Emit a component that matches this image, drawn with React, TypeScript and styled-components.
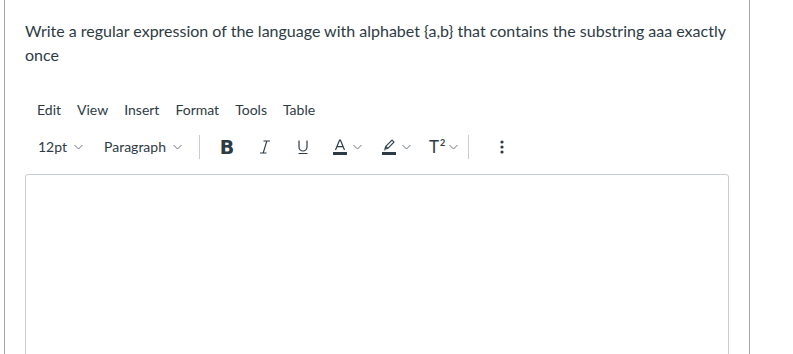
import React from "react"
import styled, { createGlobalStyle } from "styled-components"

const Global = createGlobalStyle`
  html, body { margin: 0; padding: 0; background: #fff; }
  body { font-family: Lato, "Open Sans", sans-serif; color: #2d3b45; overflow: hidden; }
`

const question =
  "Write a regular expression of the language with alphabet {a,b} that contains the substring aaa exactly once"

const Chevron = () => (
  <S.Chev width="9" height="6" viewBox="0 0 9 6">
    <path d="M0.5 1l4 4 4-4" fill="none" stroke="#6b7780" strokeWidth="1" />
  </S.Chev>
)

export default function App() {
  const menus = ["Edit", "View", "Insert", "Format", "Tools", "Table"]
  return (
    <>
      <Global />
      <S.Panel>
        <S.Question>{question}</S.Question>
        <S.MenuBar>
          {menus.map((m) => (
            <S.MenuItem key={m}>{m}</S.MenuItem>
          ))}
        </S.MenuBar>
        <S.Toolbar>
          <S.Group $gap={21}>
            <S.Drop>12pt <Chevron /></S.Drop>
            <S.Drop>Paragraph <Chevron /></S.Drop>
          </S.Group>
          <S.Sep $left={17} $right={17} />
          <S.Group $gap={18}>
            <S.Btn>
              <S.Bold>B</S.Bold>
            </S.Btn>
            <S.Btn>
              <svg width="14" height="16" viewBox="0 0 14 16">
                <path d="M5.5 2h6.5M2 14h6.5M8.8 2L5.2 14" fill="none" stroke="#2d3b45" strokeWidth="1.1" />
              </svg>
            </S.Btn>
            <S.Btn>
              <svg width="14" height="16" viewBox="0 0 14 16">
                <path d="M3 1.5v6.5a4 4 0 0 0 8 0V1.5M2.5 14.5h9" fill="none" stroke="#2d3b45" strokeWidth="1.2" />
              </svg>
            </S.Btn>
            <S.Combo>
              <svg width="18" height="18" viewBox="0 0 18 18">
                <path d="M4.5 12L8.6 2h0.8L13.5 12M6.2 8.6h5.6" fill="none" stroke="#2d3b45" strokeWidth="1.2" />
                <rect x="2" y="14" width="14" height="3" fill="#2d3b45" />
              </svg>
              <Chevron />
            </S.Combo>
            <S.Combo>
              <svg width="18" height="18" viewBox="0 0 18 18">
                <path d="M5 11l0.8-2.6 6.2-6.2 2 2-6.2 6.2z M5.8 8.4l2 2" fill="none" stroke="#2d3b45" strokeWidth="1.2" strokeLinejoin="round" />
                <path d="M3.5 12.5l1.3-1.3 1 1z" fill="#2d3b45" />
                <rect x="2" y="14" width="14" height="3" fill="#2d3b45" />
              </svg>
              <Chevron />
            </S.Combo>
            <S.Combo>
              <S.Sup>
                T<sup>2</sup>
              </S.Sup>
              <Chevron />
            </S.Combo>
          </S.Group>
          <S.Sep $left={10} $right={23} />
          <S.Btn>
            <svg width="4" height="16" viewBox="0 0 4 16">
              <circle cx="2" cy="3" r="1.6" fill="#2d3b45" />
              <circle cx="2" cy="8" r="1.6" fill="#2d3b45" />
              <circle cx="2" cy="13" r="1.6" fill="#2d3b45" />
            </svg>
          </S.Btn>
        </S.Toolbar>
        <S.Editor />
      </S.Panel>
    </>
  )
}

const S = {
  Panel: styled.div`
    margin: 0 0 0 4px;
    width: 746px;
    height: 420px;
    border-left: 1px solid #a5a5a5;
    border-right: 1px solid #a5a5a5;
    padding: 19px 20px 0 20px;
    box-sizing: border-box;
  `,

  Question: styled.p`
    margin: 0;
    font-size: 16px;
    line-height: 24px;
  `,

  MenuBar: styled.div`
    display: flex;
    margin-top: 25px;
    padding-left: 4px;
    height: 34px;
    align-items: center;
  `,

  MenuItem: styled.span`
    font-size: 14px;
    padding: 0 8px;
  `,

  Toolbar: styled.div`
    display: flex;
    align-items: center;
    height: 41px;
    padding-left: 13px;
  `,

  Group: styled.div<{ $gap: number }>`
    display: flex;
    align-items: center;
    gap: ${(p) => p.$gap}px;
  `,

  Drop: styled.span`
    display: flex;
    align-items: center;
    gap: 7px;
    font-size: 14px;
  `,

  Chev: styled.svg`
    display: block;
  `,

  Sep: styled.div<{ $left: number; $right: number }>`
    flex-shrink: 0;
    width: 1px;
    height: 24px;
    background: #c7cdd1;
    margin: 0 ${(p) => p.$right}px 0 ${(p) => p.$left}px;
  `,

  Btn: styled.span`
    display: flex;
    align-items: center;
    justify-content: center;
    width: 20px;
    height: 30px;
  `,

  Combo: styled.span`
    display: flex;
    align-items: center;
    gap: 4px;
    height: 30px;
  `,

  Bold: styled.span`
    font-family: "DejaVu Sans", "Liberation Sans", sans-serif;
    font-weight: 700;
    font-size: 19px;
  `,

  Sup: styled.span`
    font-size: 17px;
    line-height: 1;
    sup {
      font-size: 9px;
      font-weight: 700;
      vertical-align: 7px;
      margin-left: 1px;
    }
  `,

  Editor: styled.div`
    margin-top: 7px;
    width: 704px;
    height: 300px;
    border: 1px solid #c7cdd1;
    border-radius: 3px;
    box-sizing: border-box;
  `,
}
